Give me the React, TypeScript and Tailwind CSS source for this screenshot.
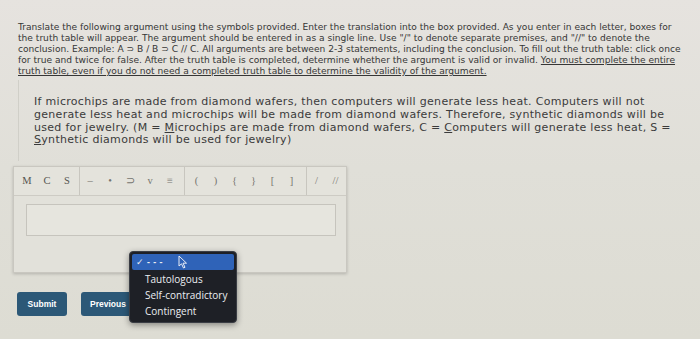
const instrucciones = [
  "Translate the following argument using the symbols provided. Enter the translation into the box provided. As you enter in each letter, boxes for",
  "the truth table will appear. The argument should be entered in as a single line. Use \"/\" to denote separate premises, and \"//\" to denote the",
  "conclusion. Example: A \u2283 B / B \u2283 C // C. All arguments are between 2-3 statements, including the conclusion. To fill out the truth table: click once",
];

const grupos = [
  { simbolos: ["M", "C", "S"], w: "w-[20px]", pad: "pl-[3px] pr-[2px]" },
  { simbolos: ["\u2013", "\u2022", "\u2283", "v", "\u2261"], w: "w-[20px]", pad: "pl-0 pr-[4px]" },
  { simbolos: ["(", ")", "{", "}", "[", "]"], w: "w-[19px]", pad: "pl-[2px] pr-[5px]" },
  { simbolos: ["/", "//"], w: "w-[19px]", pad: "pl-0 pr-0" },
];

function Toolbar() {
  return (
    <div className="flex h-[29px] items-center border-b border-[#cdcbc4] bg-[#e4e3dc]">
      {grupos.map((g, i) => (
        <div key={i} className={`flex h-full items-center ${g.pad} ${i > 0 ? "border-l border-[#c8c6bf]" : ""}`}>
          {g.simbolos.map((s) => (
            <span key={s} className={`${g.w} text-center text-[10.5px] ${i === 0 ? "text-[#55544f]" : "text-[#75736e]"}`} style={{ fontFamily: "'Liberation Serif', serif" }}>
              {s}
            </span>
          ))}
        </div>
      ))}
    </div>
  );
}

function Cursor() {
  return (
    <svg className="absolute left-[46px] top-[1px]" width="10" height="14" viewBox="0 0 10 14">
      <path d="M1 1 L1 11 L3.5 8.8 L5.5 13 L7 12.3 L5 8.2 L8.5 8.2 Z" fill="#2f63b8" stroke="#e8ecf5" strokeWidth="1" strokeLinejoin="round" />
    </svg>
  );
}

export default function App() {
  return (
    <div className="h-[339px] w-[700px] overflow-hidden bg-gradient-to-b from-[#e6e3df] via-[#e0dfd8] to-[#dddcd3] text-[#3a3a3a]" style={{ fontFamily: "'DejaVu Sans', Verdana, sans-serif" }}>
      <div className="px-[18px] pt-[22px] text-[9.1px] leading-[11px] text-[#363636]">
        {instrucciones.map((l) => (
          <div key={l} className="whitespace-nowrap">{l}</div>
        ))}
        <div className="whitespace-nowrap">
          for true and twice for false. After the truth table is completed, determine whether the argument is valid or invalid.{" "}
          <span className="underline">You must complete the entire</span>
        </div>
        <div className="whitespace-nowrap underline">truth table, even if you do not need a completed truth table to determine the validity of the argument.</div>
      </div>

      <div className="ml-[18px] mt-[3px] border-l border-[#d0cfc8] pl-[15px] pt-[16px] pb-[14px] text-[11px] leading-[12.8px] tracking-[0.3px] text-[#3b3b3b]">
        <div className="whitespace-nowrap">If microchips are made from diamond wafers, then computers will generate less heat. Computers will not</div>
        <div className="whitespace-nowrap">generate less heat and microchips will be made from diamond wafers. Therefore, synthetic diamonds will be</div>
        <div className="whitespace-nowrap">
          used for jewelry. (M = <span className="underline">M</span>icrochips are made from diamond wafers, C = <span className="underline">C</span>omputers will generate less heat, S =
        </div>
        <div className="whitespace-nowrap">
          <span className="underline">S</span>ynthetic diamonds will be used for jewelry)
        </div>
      </div>

      <div className="relative ml-[13px] mt-[5px] w-[334px]">
        <div className="h-[107px] border border-[#c9c7c0] bg-[#e2e1da] shadow-[0_1px_3px_rgba(0,0,0,0.2)]">
          <Toolbar />
          <div className="px-[12px] pt-[8px]">
            <div className="h-[32px] w-[310px] border border-[#c6c4bd] bg-[#e6e5de]" />
          </div>
        </div>

        <div className="mt-[19px] flex gap-[14px] pl-[4px]">
          <button className="h-[24px] w-[50px] rounded-[3px] bg-[#2c5877] text-[8.5px] font-bold text-white" style={{ fontFamily: "'Liberation Sans', Arial, sans-serif" }}>
            Submit
          </button>
          <button className="h-[24px] w-[60px] rounded-[3px] bg-[#2c5877] pl-[9px] text-left text-[8.5px] font-bold text-white" style={{ fontFamily: "'Liberation Sans', Arial, sans-serif" }}>
            Previous
          </button>
        </div>

        <div className="absolute left-[116px] top-[85px] w-[108px] rounded-[4px] border border-[#3a3d44] bg-[#1e2026] px-[2px] pb-[3px] pt-[2px] text-[10px] leading-[16px] text-[#eceef2] shadow-[0_2px_6px_rgba(0,0,0,0.4)]" style={{ fontFamily: "'Open Sans', 'Liberation Sans', sans-serif" }}>
          <div className="relative flex h-[16px] items-center gap-[3px] rounded-[2px] bg-[#2f63b8] pl-[4px]">
            <span className="text-[9px]">✓</span>
            <span className="text-[9px] font-bold tracking-[0.5px]">- - -</span>
            <Cursor />
          </div>
          <div className="pl-[13px] pt-[1px]">Tautologous</div>
          <div className="pl-[13px]">Self-contradictory</div>
          <div className="pl-[13px]">Contingent</div>
        </div>
      </div>
    </div>
  );
}
